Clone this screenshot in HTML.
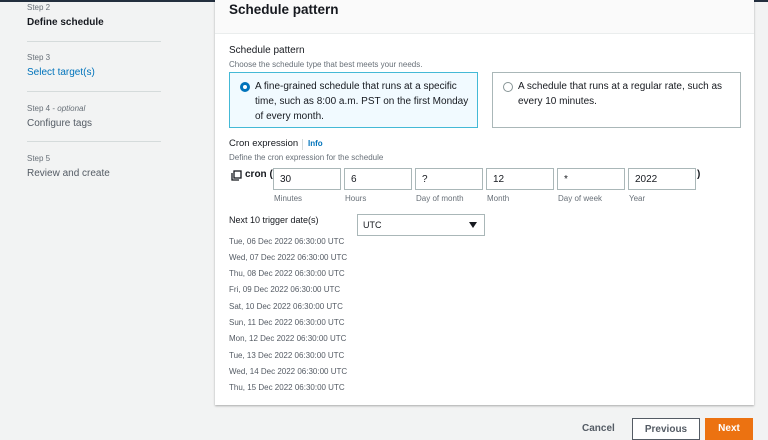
<!DOCTYPE html>
<html><head><style>
*{margin:0;padding:0;box-sizing:border-box}
body{width:768px;height:435px;overflow:hidden;background:#f2f3f3;font-family:"Liberation Sans",sans-serif;color:#16191f;position:relative}
.a{position:absolute;white-space:nowrap}
.sm{font-size:8px;color:#687078}
.nav{font-size:10px}
.hr{position:absolute;left:27px;width:134px;height:1px;background:#d5dbdb}
.inp{position:absolute;top:168px;width:68px;height:22px;border:1px solid #aab7b8;background:#fff;font-size:10px;padding:5px 6px}
.lab{position:absolute;top:194px;font-size:8px;color:#687078}
.d{position:absolute;left:229px;font-size:8px;color:#545b64}
</style></head><body>
<div class="a" style="left:0;top:0;width:768px;height:2px;background:#232f3e"></div>
<div class="a sm" style="left:27px;top:3px">Step 2</div>
<div class="a nav" style="left:27px;top:17px;font-weight:bold">Define schedule</div>
<div class="hr" style="top:41px"></div>
<div class="a sm" style="left:27px;top:53px">Step 3</div>
<div class="a nav" style="left:27px;top:67px;color:#0073bb">Select target(s)</div>
<div class="hr" style="top:91px"></div>
<div class="a sm" style="left:27px;top:104px">Step 4 - <i>optional</i></div>
<div class="a nav" style="left:27px;top:118px;color:#545b64">Configure tags</div>
<div class="hr" style="top:141px"></div>
<div class="a sm" style="left:27px;top:154px">Step 5</div>
<div class="a nav" style="left:27px;top:168px;color:#545b64">Review and create</div>

<div class="a" style="left:215px;top:0;width:539px;height:405px;background:#fff;box-shadow:0 1px 2px rgba(0,0,0,.3)"></div>
<div class="a" style="left:215px;top:0;width:539px;height:34px;background:#fafafa;border-bottom:1px solid #eaeded"></div>
<div class="a" style="left:229px;top:2px;font-size:13.5px;font-weight:bold">Schedule pattern</div>
<div class="a" style="left:229px;top:45px;font-size:10px">Schedule pattern</div>
<div class="a sm" style="left:229px;top:60px">Choose the schedule type that best meets your needs.</div>

<div class="a" style="left:229px;top:72px;width:249px;height:56px;background:#f1faff;border:1px solid #44b9d6"></div>
<div class="a" style="left:240px;top:82px;width:10px;height:10px;border-radius:50%;border:3px solid #0073bb;background:#fff"></div>
<div class="a" style="left:255px;top:79px;font-size:10px;line-height:15px;white-space:normal;width:215px">A fine-grained schedule that runs at a specific time, such as 8:00 a.m. PST on the first Monday of every month.</div>
<div class="a" style="left:492px;top:72px;width:249px;height:56px;border:1px solid #aab7b8"></div>
<div class="a" style="left:503px;top:82px;width:10px;height:10px;border-radius:50%;border:1px solid #879596"></div>
<div class="a" style="left:518px;top:79px;font-size:10px;line-height:15px;white-space:normal;width:215px">A schedule that runs at a regular rate, such as every 10 minutes.</div>

<div class="a" style="left:229px;top:138px;font-size:9.5px">Cron expression</div>
<div class="a" style="left:302px;top:139px;width:1px;height:11px;background:#d5dbdb"></div>
<div class="a" style="left:308px;top:139px;font-size:8px;font-weight:bold;color:#0073bb">Info</div>
<div class="a sm" style="left:229px;top:153px">Define the cron expression for the schedule</div>
<svg class="a" style="left:231px;top:170px" width="11" height="11" viewBox="0 0 11 11"><rect x="3" y="1" width="7" height="7" fill="none" stroke="#16191f" stroke-width="1.3"/><path d="M1 3v7h7" fill="none" stroke="#16191f" stroke-width="1.3"/></svg>
<div class="a" style="left:245px;top:169px;font-size:10px;font-weight:bold">cron (</div>
<div class="inp" style="left:273px">30</div>
<div class="inp" style="left:344px">6</div>
<div class="inp" style="left:415px">?</div>
<div class="inp" style="left:486px">12</div>
<div class="inp" style="left:557px">*</div>
<div class="inp" style="left:628px">2022</div>
<div class="a" style="left:697px;top:169px;font-size:10px;font-weight:bold">)</div>
<div class="lab" style="left:274px">Minutes</div>
<div class="lab" style="left:345px">Hours</div>
<div class="lab" style="left:416px">Day of month</div>
<div class="lab" style="left:487px">Month</div>
<div class="lab" style="left:558px">Day of week</div>
<div class="lab" style="left:629px">Year</div>

<div class="a" style="left:229px;top:215px;font-size:9px;color:#16191f">Next 10 trigger date(s)</div>
<div class="a" style="left:357px;top:214px;width:128px;height:22px;border:1px solid #aab7b8;font-size:9px;padding:5px 5px">UTC</div>
<div class="a" style="left:469px;top:222px;width:0;height:0;border-left:4px solid transparent;border-right:4px solid transparent;border-top:6px solid #16191f"></div>

<div class="d" style="top:237px">Tue, 06 Dec 2022 06:30:00 UTC</div>
<div class="d" style="top:253px">Wed, 07 Dec 2022 06:30:00 UTC</div>
<div class="d" style="top:269px">Thu, 08 Dec 2022 06:30:00 UTC</div>
<div class="d" style="top:285px">Fri, 09 Dec 2022 06:30:00 UTC</div>
<div class="d" style="top:302px">Sat, 10 Dec 2022 06:30:00 UTC</div>
<div class="d" style="top:318px">Sun, 11 Dec 2022 06:30:00 UTC</div>
<div class="d" style="top:334px">Mon, 12 Dec 2022 06:30:00 UTC</div>
<div class="d" style="top:351px">Tue, 13 Dec 2022 06:30:00 UTC</div>
<div class="d" style="top:367px">Wed, 14 Dec 2022 06:30:00 UTC</div>
<div class="d" style="top:383px">Thu, 15 Dec 2022 06:30:00 UTC</div>

<div class="a" style="left:582px;top:423px;font-size:10px;font-weight:bold;color:#545b64">Cancel</div>
<div class="a" style="left:632px;top:418px;width:68px;height:22px;border:1px solid #545b64;background:#fff;font-size:10px;font-weight:bold;color:#545b64;text-align:center;padding-top:5px">Previous</div>
<div class="a" style="left:705px;top:418px;width:48px;height:22px;background:#ec7211;font-size:10px;font-weight:bold;color:#fff;text-align:center;padding-top:5px">Next</div>
</body></html>
